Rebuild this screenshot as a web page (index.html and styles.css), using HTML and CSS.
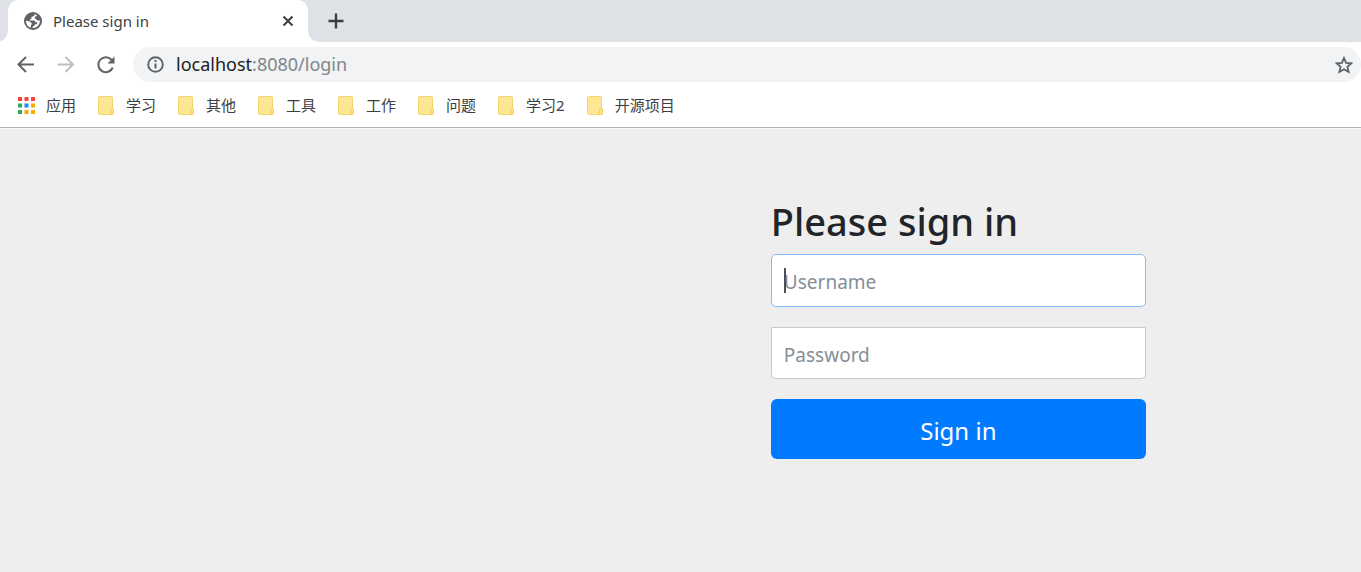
FILE: index.html
```html
<!DOCTYPE html>
<html lang="en">
  <head>
    <meta charset="utf-8">
    <title>Please sign in</title>
    <link rel="stylesheet" href="styles.css">
  </head>
  <body>
    <svg class="defs" width="0" height="0" aria-hidden="true">
      <symbol id="folder" viewBox="0 0 17 19">
        <path d="M.5 1.500a1 1 0 0 1 1-1h12a1 1 0 0 1 1 1v16a1 1 0 0 1-1 1h-12a1 1 0 0 1-1-1z" fill="#ffe694" stroke="#f3d670"/>
        <path d="M12.500 18v-3.500a2 2 0 0 1 2-2 1 1 0 0 1 1 1v4a1 1 0 0 1-1 1h-1.500z" fill="#ffe27a" stroke="#f1d05a"/>
      </symbol>
    </svg>

    <header class="browser">
      <div class="tab-strip">
        <div class="tab">
          <svg class="tab-icon" width="18" height="18" viewBox="0 0 18 18" aria-hidden="true">
            <circle cx="9" cy="9" r="9" fill="#5f6368"/>
            <path d="M10.500 2.200c-.2 1.300-.3 2-1.500 2.200-1.400.2-1.800.7-1.600 1.700.1.900-.5 1.300-1.500 1.300l-.3 1.200h4c1.200 0 1.600.6 1.700 1.600h2c.4 1.300-.6 2-1.600 2.100-1.200.2-1.100 1.500-2.100 1.900-.8.300-1.200.8-1.100 1.700A7 7 0 0 0 15.900 8c-.8.9-2 1-2.800.3-.5-.5-.4-1.200-1.200-1.300-1-.2-1.500-.9-1.200-1.700.3-.7 1.400-.7 2-1.300l.1-.9a7 7 0 0 0-2.300-.9zM2 8.700c1.500.2 3.200.3 4.200 1.300.7.8 1.700.8 1.600 1.800-.1.800-.9 1-.9 1.900l.1 1.900A7 7 0 0 1 2 8.700z" fill="#fff"/>
          </svg>
          <span class="tab-title">Please sign in</span>
          <button class="icon-button" aria-label="Close tab">
            <svg width="12" height="12" viewBox="0 0 12 12"><path d="M1.500 1.500l9 9m0-9l-9 9" stroke="#3c4043" stroke-width="2"/></svg>
          </button>
        </div>
        <button class="icon-button new-tab" aria-label="New tab">
          <svg width="16" height="16" viewBox="0 0 16 16"><path d="M8 .5v15M.5 8h15" stroke="#3c4043" stroke-width="2.400"/></svg>
        </button>
      </div>

      <div class="toolbar">
        <button class="icon-button" aria-label="Back">
          <svg width="20" height="20" viewBox="0 0 20 20"><path d="M19 9.500H3.500M11 2L3.500 9.500 11 17" fill="none" stroke="#5f6368" stroke-width="2"/></svg>
        </button>
        <button class="icon-button" aria-label="Forward" disabled>
          <svg width="20" height="20" viewBox="0 0 20 20"><path d="M2.500 9.500H18M10.500 2L18 9.500 10.500 17" fill="none" stroke="#bdbfc1" stroke-width="2"/></svg>
        </button>
        <button class="icon-button" aria-label="Reload">
          <svg width="20" height="20" viewBox="0 0 20 20"><path d="M17.800 12.500a7.500 7.500 0 1 1-1.500-8L18 6.200" fill="none" stroke="#5f6368" stroke-width="2"/><path d="M19.500 1.500v7h-7z" fill="#5f6368"/></svg>
        </button>
        <div class="address-bar">
          <svg width="17" height="17" viewBox="0 0 17 17" aria-hidden="true">
            <circle cx="8.500" cy="8.500" r="7.300" fill="none" stroke="#5f6368" stroke-width="1.900"/>
            <path d="M8.500 4v2M8.500 7.500v5" stroke="#5f6368" stroke-width="2"/>
          </svg>
          <span class="url"><span class="url-host">localhost</span>:8080/login</span>
          <button class="icon-button" aria-label="Bookmark this page">
            <svg width="18" height="18" viewBox="0 0 18 18"><path d="M9 2l2.100 4.900 5.300.4-4 3.500 1.200 5.200L9 13.300 4.400 16l1.200-5.200-4-3.500 5.300-.4z" fill="none" stroke="#5f6368" stroke-width="1.800"/></svg>
          </button>
        </div>
      </div>

      <nav class="bookmarks">
        <a class="bookmark" href="#">
          <svg width="17" height="17" viewBox="0 0 17 17" aria-hidden="true">
            <path d="M0 0h4v4H0zM6.500 0h4v4h-4zM13 0h4v4h-4z" fill="#f44336"/>
            <path d="M0 6.500h4v4H0zM0 13h4v4H0z" fill="#34a853"/>
            <path d="M6.500 6.500h4v4h-4z" fill="#1e88f5"/>
            <path d="M13 6.500h4v4h-4zM6.500 13h4v4h-4zM13 13h4v4h-4z" fill="#f9ab00"/>
          </svg>
          应用
        </a>
        <a class="bookmark" href="#"><svg width="17" height="19"><use href="#folder"/></svg>学习</a>
        <a class="bookmark" href="#"><svg width="17" height="19"><use href="#folder"/></svg>其他</a>
        <a class="bookmark" href="#"><svg width="17" height="19"><use href="#folder"/></svg>工具</a>
        <a class="bookmark" href="#"><svg width="17" height="19"><use href="#folder"/></svg>工作</a>
        <a class="bookmark" href="#"><svg width="17" height="19"><use href="#folder"/></svg>问题</a>
        <a class="bookmark" href="#"><svg width="17" height="19"><use href="#folder"/></svg>学习2</a>
        <a class="bookmark" href="#"><svg width="17" height="19"><use href="#folder"/></svg>开源项目</a>
      </nav>
    </header>

    <main class="page">
      <form class="form-signin">
        <h2 class="form-heading">Please sign in</h2>
        <div class="field">
          <input class="form-control username" type="text" name="username" placeholder="Username" aria-label="Username">
          <span class="caret"></span>
        </div>
        <div class="field">
          <input class="form-control password" type="password" name="password" placeholder="Password" aria-label="Password">
        </div>
        <button class="submit" type="submit">Sign in</button>
      </form>
    </main>
  </body>
</html>
```

FILE: styles.css
```css
:root {
  --strip: #dee1e6;
  --text: #3c4043;
  --primary: #007bff;
}

* {
  box-sizing: border-box;
}

body {
  margin: 0;
  min-height: 100vh;
  overflow-x: hidden;
  background: #eee;
  font-family: "Noto Sans", "Noto Sans CJK SC", sans-serif;
}

svg {
  display: block;
  flex-shrink: 0;
}

.defs {
  position: absolute;
}

.browser {
  background: #fff;
  border-bottom: 1px solid #b0b0b0;
  box-shadow: 0 1px 0 #f8f8f8;
}

.icon-button {
  display: flex;
  padding: 0;
  border: none;
  background: none;
  cursor: pointer;
}

.tab-strip {
  display: flex;
  align-items: center;
  height: 42px;
  padding-left: 8px;
  background: var(--strip);
}

.tab {
  position: relative;
  display: flex;
  align-items: center;
  width: 300px;
  height: 42px;
  padding: 0 14px 0 16px;
  border-radius: 10px 10px 0 0;
  background: #fff;
}

/* curved feet of the active tab */
.tab::before,
.tab::after {
  content: "";
  position: absolute;
  bottom: 0;
  width: 10px;
  height: 10px;
}

.tab::before {
  right: 100%;
  background: radial-gradient(circle at 0 0, var(--strip) 9px, #fff 10px);
}

.tab::after {
  left: 100%;
  background: radial-gradient(circle at 100% 0, var(--strip) 9px, #fff 10px);
}

.tab-title {
  flex: 1;
  margin-left: 11px;
  font-size: 15px;
  color: var(--text);
}

.new-tab {
  margin-left: 20px;
}

.toolbar {
  display: flex;
  align-items: center;
  gap: 20px;
  height: 45px;
  padding-left: 15px;
}

.address-bar {
  display: flex;
  flex: 1;
  align-items: center;
  height: 35px;
  margin-left: -2px;
  padding: 0 8px 0 14px;
  border-radius: 18px;
  background: #f1f3f4;
}

.url {
  flex: 1;
  margin-left: 12px;
  padding-bottom: 2px;
  font-size: 18px;
  color: #80868b;
}

.url-host {
  color: #202124;
}

.bookmarks {
  display: flex;
  align-items: center;
  gap: 22px;
  height: 40px;
  padding: 0 18px 4px;
}

.bookmark {
  display: flex;
  align-items: center;
  gap: 11px;
  font-size: 15px;
  line-height: 20px;
  color: var(--text);
  text-decoration: none;
}

/* sign-in form sits right of centre, at a fixed share of the free width */
.page {
  display: grid;
  grid-template-columns: 43fr 375px 12fr;
  padding: 69px 0;
}

.form-signin {
  grid-column: 2;
}

.form-heading {
  margin: 0 0 9px;
  font-size: 38px;
  font-weight: 500;
  line-height: 48px;
  white-space: nowrap;
  color: #212529;
}

.field {
  position: relative;
  margin-bottom: 20px;
}

.form-control {
  display: block;
  width: 100%;
  height: 52px;
  padding: 3px 12px 0;
  border: 1px solid #ced4da;
  border-radius: 5px;
  background: #fff;
  font-family: inherit;
  font-size: 19px;
  color: #495057;
}

.form-control::placeholder {
  color: #868e96;
  opacity: 1;
}

.username {
  height: 53px;
  border-color: #80bdff;
}

.password {
  border-color: #c8c8c8;
  border-radius: 0 0 5px 5px;
}

.caret {
  position: absolute;
  top: 14px;
  left: 13px;
  width: 2px;
  height: 25px;
  background: #495057;
}

.submit {
  display: block;
  width: 100%;
  height: 60px;
  padding: 2px 20px 0;
  border: none;
  border-radius: 6px;
  background: var(--primary);
  font-family: inherit;
  font-size: 24px;
  color: #fff;
  cursor: pointer;
}
```
